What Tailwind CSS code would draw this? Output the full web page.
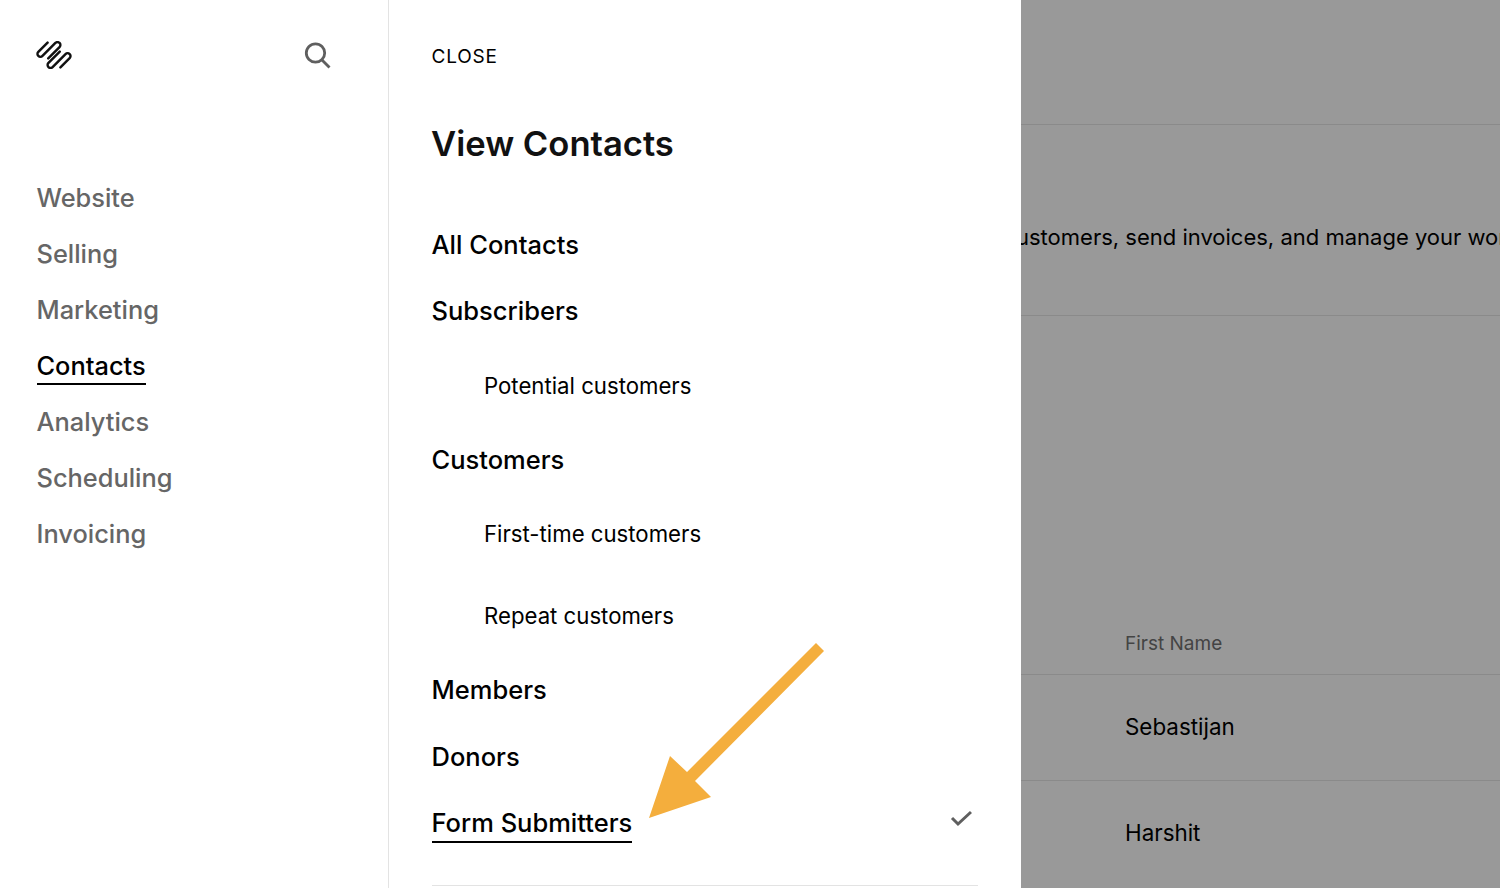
<!DOCTYPE html>
<html lang="en">
<head>
    <meta charset="UTF-8">
    <title>Contacts</title>
    <script src="https://cdn.jsdelivr.net/npm/@tailwindcss/browser@4"></script>
</head>
<body class="bg-white font-['Inter',sans-serif] antialiased">
    <div class="relative flex h-[888px] w-[1500px] overflow-hidden">
        <!-- main nav -->
        <aside class="w-[389px] shrink-0 border-r border-[#e3e3e3] bg-white pl-[36.5px] pr-[57px]">
            <div class="flex h-[110px] items-center justify-between">
                <svg class="ml-[-1px] h-[28px] w-[36px]" viewBox="48 33 107 85" fill="none" stroke="#111" stroke-width="7.5" stroke-linecap="round">
                    <path d="M82 38 L54 66 A8.8 8.8 0 0 0 66.5 78.5 L105.75 39 A8.8 8.8 0 0 1 118.25 51.5 L84 86"/>
                    <path transform="rotate(180 101.5 75.5)" d="M82 38 L54 66 A8.8 8.8 0 0 0 66.5 78.5 L105.75 39 A8.8 8.8 0 0 1 118.25 51.5 L84 86"/>
                </svg>
                <svg class="h-[28px] w-[28px]" viewBox="0 0 28 28" fill="none" stroke="#5f5f5f" stroke-width="2.8">
                    <circle cx="12.5" cy="12" r="9.2"/>
                    <path d="M19 19 L26.5 26.5"/>
                </svg>
            </div>
            <nav class="mt-[70px] flex flex-col items-start gap-[21px] text-[25.4px] font-medium leading-[35px] text-[#666]">
                <a>Website</a>
                <a>Selling</a>
                <a>Marketing</a>
                <a class="mb-[-2px] border-b-2 border-black text-black">Contacts</a>
                <a>Analytics</a>
                <a>Scheduling</a>
                <a>Invoicing</a>
            </nav>
        </aside>

        <!-- contacts panel -->
        <section class="w-[632px] shrink-0 bg-white pl-[43px] pr-[43px] text-black">
            <div class="ml-[-0.5px] pt-[45px] text-[19px] leading-[24px] tracking-[0.8px]">CLOSE</div>
            <h1 class="ml-[-1px] mt-[50px] text-[34.6px] font-semibold leading-[49px] text-[#111]">View Contacts</h1>
            <ul class="ml-[-0.5px] mt-[61px] text-[25.5px] font-medium leading-[32px]">
                <li>All Contacts</li>
                <li class="mt-[34px]">Subscribers</li>
                <li class="ml-[52.5px] mt-[43px] text-[22.2px] font-normal">Potential customers</li>
                <li class="mt-[42px]">Customers</li>
                <li class="ml-[52.5px] mt-[42px] text-[22.2px] font-normal">First-time customers</li>
                <li class="ml-[52.5px] mt-[50px] text-[22.2px] font-normal">Repeat customers</li>
                <li class="mt-[42px]">Members</li>
                <li class="mt-[35px]">Donors</li>
                <li class="mt-[34px] flex items-start justify-between border-b border-[#e3e3e3] pb-[42px]">
                    <span class="border-b-2 border-black pb-[3px] leading-[31px]">Form Submitters</span>
                    <svg class="mr-[6px] mt-0 h-[22px] w-[22px]" viewBox="0 0 22 22" fill="none" stroke="#5f5f5f" stroke-width="3">
                        <path d="M2 11 L8 17 L21 5"/>
                    </svg>
                </li>
            </ul>
        </section>

        <!-- dimmed page behind the panel -->
        <main class="min-w-0 flex-1 overflow-hidden bg-[#999] text-black">
            <div class="h-[125px] border-b border-[#8a8a8a]"></div>
            <div class="flex h-[191px] items-center whitespace-nowrap border-b border-[#8a8a8a] pt-[34px] text-[22px]">
                <span class="ml-[-5px]">ustomers, send invoices, and manage your work</span>
            </div>
            <div class="flex h-[359px] items-end border-b border-[#8a8a8a] pb-[17px] pl-[104px] text-[19px] leading-[26px] text-[#444]">First Name</div>
            <div class="flex h-[106px] items-center border-b border-[#8a8a8a] pb-[2px] pl-[104px] text-[22.4px]">Sebastijan</div>
            <div class="flex h-[106px] items-center pb-[2px] pl-[104px] text-[22.4px]">Harshit</div>
        </main>

        <!-- annotation arrow -->
        <svg class="pointer-events-none absolute left-0 top-0" width="1500" height="888" viewBox="0 0 1500 888">
            <polygon fill="#f4ae3d" points="649,818 670,756 687,772 816,643 824,651 695,781 711,797"/>
        </svg>
    </div>
</body>
</html>
